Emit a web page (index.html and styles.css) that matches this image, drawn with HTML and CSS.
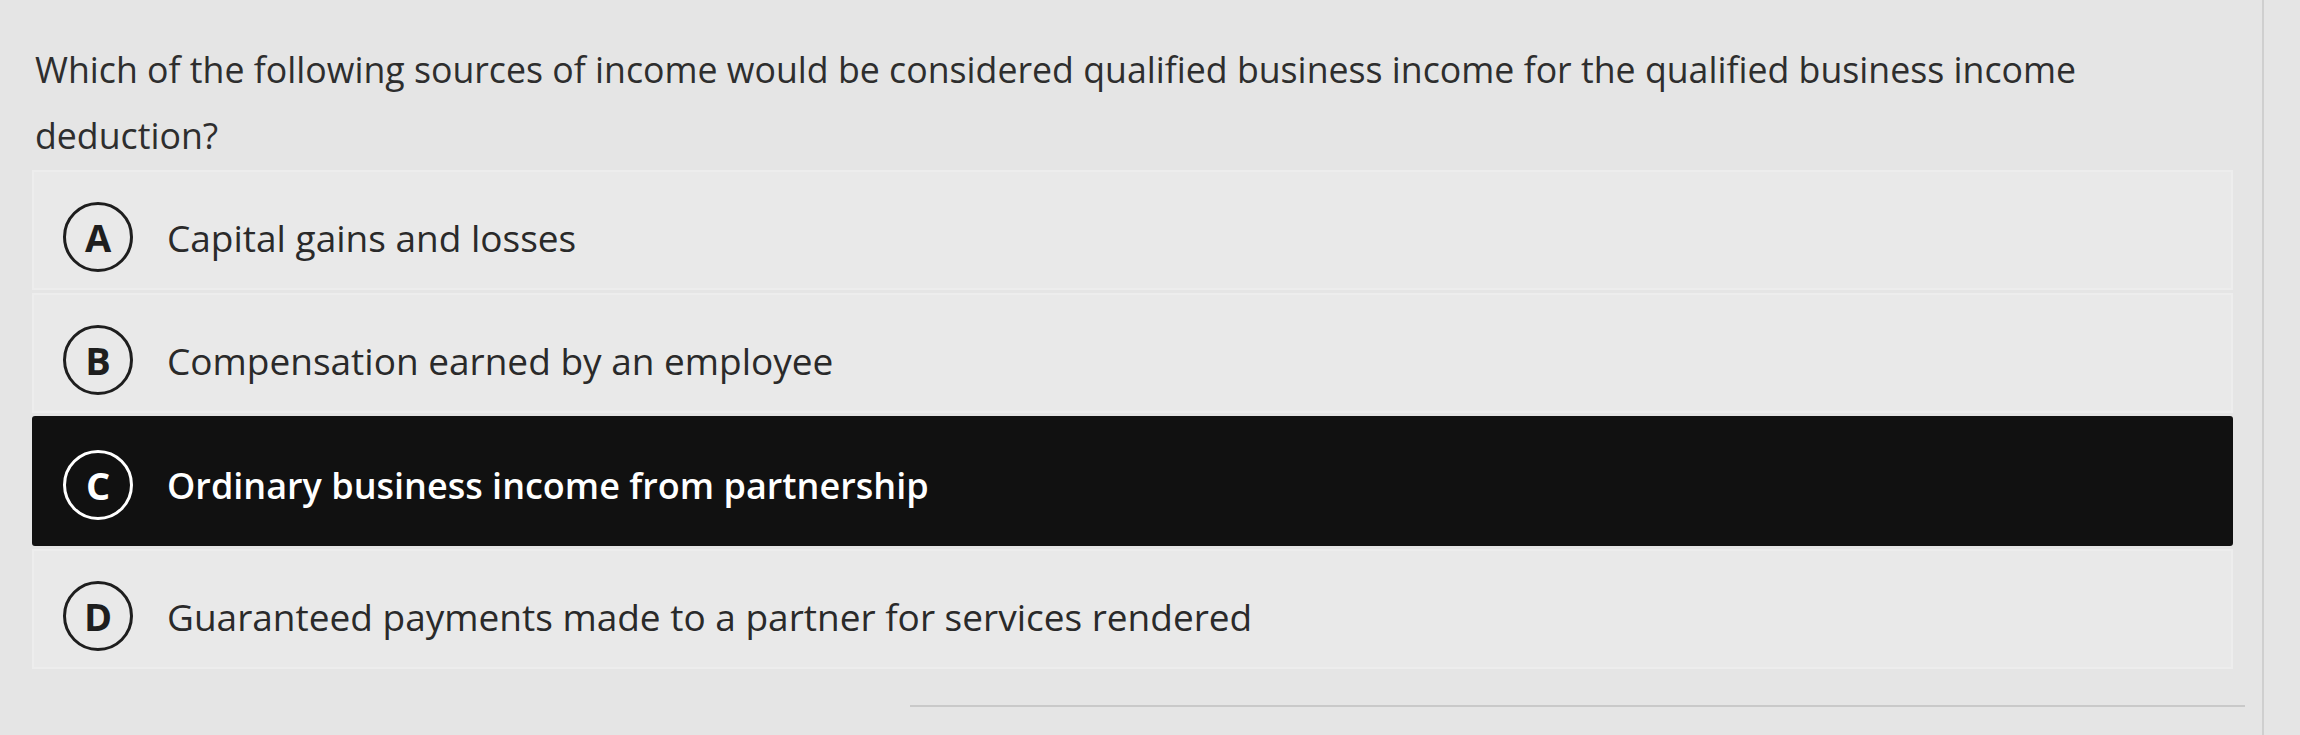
FILE: index.html
```html
<!DOCTYPE html>
<html lang="en">
<head>
<meta charset="utf-8">
<title>Question</title>
<link rel="stylesheet" href="styles.css">
</head>
<body>
<div class="page">
  <main class="content">
    <p class="question">Which of the following sources of income would be considered qualified business income for the qualified business income deduction?</p>
    <ul class="options">
      <li class="option"><span class="badge">A</span><span class="label">Capital gains and losses</span></li>
      <li class="option"><span class="badge">B</span><span class="label">Compensation earned by an employee</span></li>
      <li class="option selected"><span class="badge">C</span><span class="label">Ordinary business income from partnership</span></li>
      <li class="option"><span class="badge">D</span><span class="label">Guaranteed payments made to a partner for services rendered</span></li>
    </ul>
    <div class="footer-rule"></div>
  </main>
  <div class="edge"></div>
</div>
</body>
</html>
```
FILE: styles.css
```css
* { box-sizing: border-box; }
html, body { margin: 0; padding: 0; }
body {
  width: 2300px;
  height: 735px;
  overflow: hidden;
  background: #e5e5e5;
  font-family: "Open Sans", "Noto Sans", "Liberation Sans", sans-serif;
  color: #2a2a2a;
}
.page {
  display: flex;
  height: 735px;
}
.content {
  width: 2262px;
  padding: 36px 0 0 32px;
  display: flex;
  flex-direction: column;
}
.edge {
  width: 2px;
  background: #cfcfcf;
}
.question {
  margin: 0 0 2px 3px;
  font-size: 35.7px;
  line-height: 66px;
  width: 2150px;
  color: #2e2e2e;
}
.options {
  list-style: none;
  margin: 0;
  padding: 0;
  width: 2201px;
  display: flex;
  flex-direction: column;
  gap: 3px;
}
.option {
  height: 120px;
  display: flex;
  align-items: center;
  padding: 14px 0 0 29px;
  background: #e9e9e9;
  border: 2px solid #ededed;
}
.badge {
  width: 70px;
  height: 70px;
  border-radius: 50%;
  border: 3.5px solid #1e1e1e;
  display: flex;
  align-items: center;
  justify-content: center;
  font-weight: 700;
  font-size: 38px;
  line-height: 1;
  color: #1e1e1e;
  flex: none;
}
.label {
  margin-left: 34px;
  font-size: 37px;
  color: #2a2a2a;
}
.option.selected {
  height: 130px;
  background: #111111;
  border-color: #111111;
  border-radius: 3px;
  padding-top: 8px;
}
.selected .badge {
  border-color: #ffffff;
  color: #ffffff;
}
.selected .label {
  color: #ffffff;
  font-weight: 600;
  font-size: 36px;
}
.footer-rule {
  margin: 36px 0 0 878px;
  width: 1335px;
  height: 2px;
  background: #c9c9c9;
}
```
